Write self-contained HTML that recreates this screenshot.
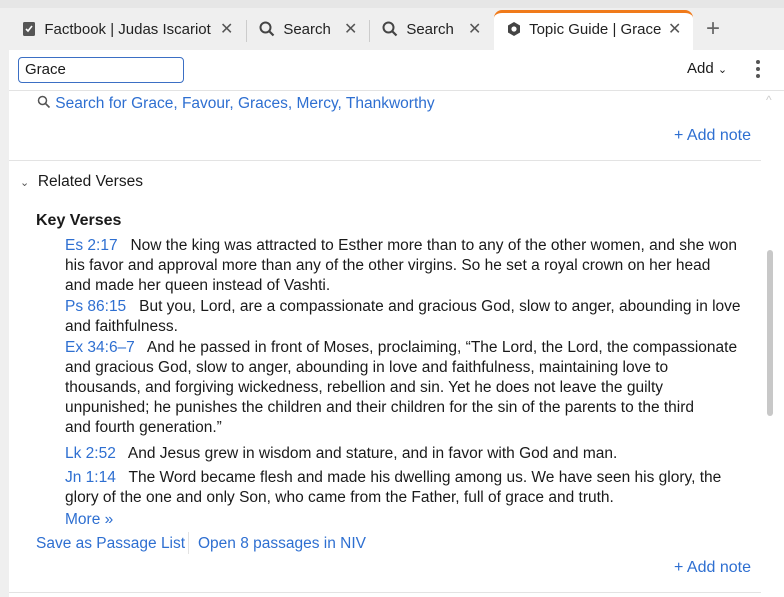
<!DOCTYPE html>
<html><head><style>
body{margin:0;width:784px;height:597px;overflow:hidden;background:#efefef;font-family:"Liberation Sans Narrow","Liberation Sans",sans-serif;position:relative;color:#1a1a1a}
.a{position:absolute;white-space:nowrap}
.tab{position:absolute;top:13px;height:34px;font-size:15px;line-height:34px;color:#222}
.x{position:absolute;top:13px;line-height:34px;color:#555;font-size:16px}
.lnk{color:#2e6fd1}
.t{font-size:15.5px;line-height:20px}
</style></head><body>
<div class="a" style="top:0;left:0;width:784px;height:8px;background:#e6e6e6"></div>
<div class="tab" style="left:22px"><svg width="14" height="16" style="vertical-align:-3px"><rect x="1" y="1" width="12" height="14" rx="1.5" fill="#555"/><path d="M4 8l2 2 4-5" stroke="#fff" stroke-width="1.6" fill="none"/></svg>&nbsp; Factbook | Judas Iscariot</div>
<div class="x" style="left:220px">✕</div>
<div class="a" style="left:246px;top:20px;width:1px;height:22px;background:#ccc"></div>
<div class="tab" style="left:259px"><svg width="16" height="16" style="vertical-align:-3px"><circle cx="6.5" cy="6.5" r="5" stroke="#444" stroke-width="2" fill="none"/><path d="M10 10l4.5 4.5" stroke="#444" stroke-width="2.2"/></svg>&nbsp; Search</div>
<div class="x" style="left:344px">✕</div>
<div class="a" style="left:369px;top:20px;width:1px;height:22px;background:#ccc"></div>
<div class="tab" style="left:382px"><svg width="16" height="16" style="vertical-align:-3px"><circle cx="6.5" cy="6.5" r="5" stroke="#444" stroke-width="2" fill="none"/><path d="M10 10l4.5 4.5" stroke="#444" stroke-width="2.2"/></svg>&nbsp; Search</div>
<div class="x" style="left:468px">✕</div>
<div class="a" style="left:494px;top:10px;width:199px;height:42px;background:#fff;border-radius:8px 8px 0 0;border-top:3px solid #f07a1a;box-sizing:border-box"></div>
<div class="tab" style="left:507px"><svg width="14" height="16" style="vertical-align:-3px"><path d="M7 1l6 3.5v7L7 15 1 11.5v-7z" fill="#444"/><circle cx="7" cy="8" r="2.6" fill="#fff"/></svg>&nbsp; Topic Guide | Grace</div>
<div class="x" style="left:668px">✕</div>
<div class="a" style="left:706px;top:15px;font-size:24px;color:#666;font-family:'Liberation Sans',sans-serif">+</div>
<div class="a" style="left:9px;top:50px;width:775px;height:547px;background:#fff"></div>
<div class="a" style="left:18px;top:57px;width:158px;height:24px;border:1px solid #3b6fc4;border-radius:4px;font-size:15px;line-height:24px;padding-left:6px;box-sizing:content-box">Grace</div>
<div class="a" style="left:687px;top:60px;font-size:15px">Add <span style="font-size:11px">⌄</span></div>
<div class="a" style="left:756px;top:60px;width:4px;height:18px"><div style="width:4px;height:4px;border-radius:2px;background:#555;margin-bottom:3px"></div><div style="width:4px;height:4px;border-radius:2px;background:#555;margin-bottom:3px"></div><div style="width:4px;height:4px;border-radius:2px;background:#555"></div></div>
<div class="a" style="left:9px;top:90px;width:775px;height:1px;background:#e3e3e3"></div>
<div class="a lnk" style="left:37px;top:95px;font-size:15.5px"><svg width="14" height="14" style="vertical-align:-1px"><circle cx="5.5" cy="5.5" r="4" stroke="#555" stroke-width="1.5" fill="none"/><path d="M8.5 8.5l4 4" stroke="#555" stroke-width="1.6"/></svg>&nbsp;Search for Grace, Favour, Graces, Mercy, Thankworthy</div>
<div class="a" style="left:766px;top:93px;color:#ccc;font-size:12px">^</div>
<div class="a lnk" style="left:674px;top:127px;font-size:16px">+ Add note</div>
<div class="a" style="left:9px;top:160px;width:752px;height:1px;background:#e3e3e3"></div>
<div class="a" style="left:20px;top:173px;font-size:15.5px"><span style="font-size:11px;color:#555">⌄</span>&nbsp; Related Verses</div>
<div class="a" style="left:36px;top:212px;font-size:16px;font-weight:bold">Key Verses</div>
<div class="a" style="left:767px;top:250px;width:6px;height:166px;border-radius:3px;background:#c8c8c8"></div>
<div class="a t" style="left:65px;top:236px"><span class="lnk">Es 2:17</span>&nbsp;&nbsp; Now the king was attracted to Esther more than to any of the other women, and she won</div>
<div class="a t" style="left:65px;top:256px">his favor and approval more than any of the other virgins. So he set a royal crown on her head</div>
<div class="a t" style="left:65px;top:276px">and made her queen instead of Vashti.</div>
<div class="a t" style="left:65px;top:297px"><span class="lnk">Ps 86:15</span>&nbsp;&nbsp; But you, Lord, are a compassionate and gracious God, slow to anger, abounding in love</div>
<div class="a t" style="left:65px;top:317px">and faithfulness.</div>
<div class="a t" style="left:65px;top:338px"><span class="lnk">Ex 34:6–7</span>&nbsp;&nbsp; And he passed in front of Moses, proclaiming, “The Lord, the Lord, the compassionate</div>
<div class="a t" style="left:65px;top:358px">and gracious God, slow to anger, abounding in love and faithfulness, maintaining love to</div>
<div class="a t" style="left:65px;top:378px">thousands, and forgiving wickedness, rebellion and sin. Yet he does not leave the guilty</div>
<div class="a t" style="left:65px;top:398px">unpunished; he punishes the children and their children for the sin of the parents to the third</div>
<div class="a t" style="left:65px;top:418px">and fourth generation.”</div>
<div class="a t" style="left:65px;top:444px"><span class="lnk">Lk 2:52</span>&nbsp;&nbsp; And Jesus grew in wisdom and stature, and in favor with God and man.</div>
<div class="a t" style="left:65px;top:468px"><span class="lnk">Jn 1:14</span>&nbsp;&nbsp; The Word became flesh and made his dwelling among us. We have seen his glory, the</div>
<div class="a t" style="left:65px;top:488px">glory of the one and only Son, who came from the Father, full of grace and truth.</div>
<div class="a t lnk" style="left:65px;top:510px">More »</div>
<div class="a t lnk" style="left:36px;top:534px">Save as Passage List</div>
<div class="a" style="left:188px;top:532px;width:1px;height:22px;background:#e3e3e3"></div>
<div class="a t lnk" style="left:198px;top:534px">Open 8 passages in NIV</div>
<div class="a lnk" style="left:674px;top:559px;font-size:16px">+ Add note</div>
<div class="a" style="left:9px;top:592px;width:752px;height:1px;background:#e3e3e3"></div>
</body></html>
